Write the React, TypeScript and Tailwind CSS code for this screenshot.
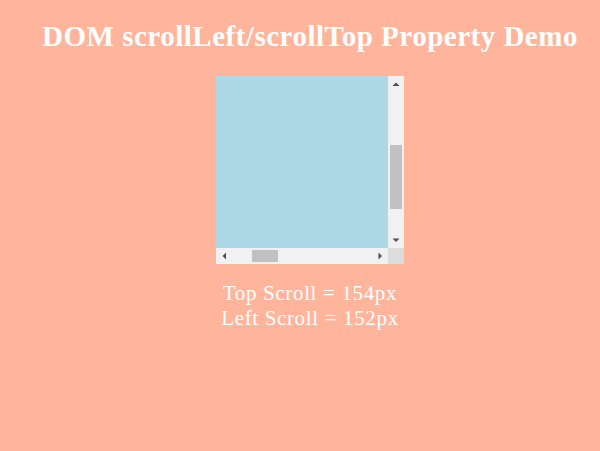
import React from 'react';

const Arrow: React.FC<{ dir: 'up' | 'down' | 'left' | 'right' }> = ({ dir }) => {
  const pts = {
    up: '4.5,10 8,6.5 11.5,10',
    down: '4.5,6.5 8,10 11.5,6.5',
    left: '10,4.5 6.5,8 10,11.5',
    right: '6.5,4.5 10,8 6.5,11.5',
  }[dir];
  return (
    <svg width="16" height="16" viewBox="0 0 16 16">
      <polygon points={pts} fill="#505050" />
    </svg>
  );
};

const ScrollBox: React.FC = () => (
  <div className="mx-auto grid w-[188px] grid-cols-[172px_16px] grid-rows-[172px_16px]">
    <div className="bg-[#add8e6]" />
    <div className="flex flex-col bg-[#f1f1f1]">
      <div className="flex h-[16px] items-center justify-center">
        <Arrow dir="up" />
      </div>
      <div className="flex-1 px-[2px] pt-[53px]">
        <div className="h-[64px] bg-[#c1c1c1]" />
      </div>
      <div className="flex h-[16px] items-center justify-center">
        <Arrow dir="down" />
      </div>
    </div>
    <div className="flex bg-[#f1f1f1]">
      <div className="flex w-[16px] items-center justify-center">
        <Arrow dir="left" />
      </div>
      <div className="flex-1 py-[2px] pl-[20px]">
        <div className="h-full w-[26px] bg-[#c1c1c1]" />
      </div>
      <div className="flex w-[16px] items-center justify-center">
        <Arrow dir="right" />
      </div>
    </div>
    <div className="bg-[#dcdcdc]" />
  </div>
);

export default function App() {
  return (
    <div className="min-h-[451px] bg-[#ffb59b] pl-[20px] text-center text-white [font-family:'Liberation_Serif',serif]">
      <h1 className="pt-[20px] text-[29px] leading-[32px] font-bold tracking-[0.5px]">
        DOM scrollLeft/scrollTop Property Demo
      </h1>
      <div className="mt-[24px]">
        <ScrollBox />
      </div>
      <div className="mt-[17px] text-[21px] leading-[25px] tracking-[0.65px]">
        <div>Top Scroll = 154px</div>
        <div>Left Scroll = 152px</div>
      </div>
    </div>
  );
}
